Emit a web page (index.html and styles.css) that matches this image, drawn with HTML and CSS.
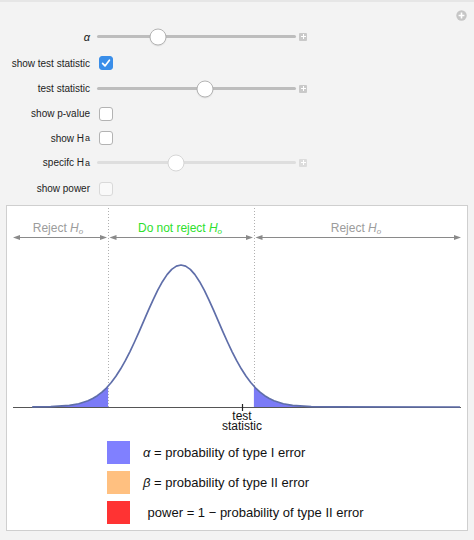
FILE: index.html
```html
<!DOCTYPE html>
<html>
<head>
<meta charset="utf-8">
<link rel="stylesheet" href="styles.css">
</head>
<body>
<div class="panel">
  <div class="topbar">
    <svg class="corner-plus" width="11" height="11" viewBox="0 0 11 11"><circle cx="5.5" cy="5.5" r="5.2" fill="#c6c6c6"/><path d="M5.5 2.6v5.8M2.6 5.5h5.8" stroke="#fff" stroke-width="1.6"/></svg>
  </div>
  <div class="controls">
    <div class="label"><i>α</i></div>
    <div class="ctrl">
      <div class="slider"><div class="track"><span class="thumb" style="left:30.7%"></span></div><span class="pbox"></span></div>
    </div>

    <div class="label">show test statistic</div>
    <div class="ctrl"><span class="cb checked"><svg width="14" height="14" viewBox="0 0 14 14"><path d="M3.6 7.4L6 9.9L10.4 4.2" fill="none" stroke="#fff" stroke-width="1.7" stroke-linecap="round" stroke-linejoin="round"/></svg></span></div>

    <div class="label">test statistic</div>
    <div class="ctrl">
      <div class="slider"><div class="track"><span class="thumb" style="left:54.3%"></span></div><span class="pbox"></span></div>
    </div>

    <div class="label">show p-value</div>
    <div class="ctrl"><span class="cb"></span></div>

    <div class="label">show H<sub>a</sub></div>
    <div class="ctrl"><span class="cb"></span></div>

    <div class="label">specifc H<sub>a</sub></div>
    <div class="ctrl">
      <div class="slider disabled"><div class="track"><span class="thumb" style="left:39.7%"></span></div><span class="pbox"></span></div>
    </div>

    <div class="label">show power</div>
    <div class="ctrl"><span class="cb disabled"></span></div>
  </div>

  <div class="plot">
    <svg class="chart" width="460" height="226" viewBox="7 206 460 226">
      <g stroke="#b0b0b0" stroke-width="1" stroke-dasharray="1 2">
        <line x1="108.5" y1="208" x2="108.5" y2="407"/>
        <line x1="254.5" y1="208" x2="254.5" y2="407"/>
      </g>
      <g font-family="Liberation Sans, Arial, sans-serif" font-size="12" text-anchor="middle">
        <text x="58" y="232" fill="#9c9c9c">Reject <tspan font-style="italic">H</tspan><tspan font-style="italic" font-size="8" dy="2">o</tspan></text>
        <text x="180" y="232" fill="#2ee02e" textLength="84">Do not reject <tspan font-style="italic">H</tspan><tspan font-style="italic" font-size="8" dy="2">o</tspan></text>
        <text x="356" y="232" fill="#9c9c9c">Reject <tspan font-style="italic">H</tspan><tspan font-style="italic" font-size="8" dy="2">o</tspan></text>
      </g>
      <g stroke="#8a8a8a" stroke-width="1">
        <line x1="16" y1="237.5" x2="104" y2="237.5"/>
        <line x1="112" y1="237.5" x2="250" y2="237.5"/>
        <line x1="258" y1="237.5" x2="458" y2="237.5"/>
      </g>
      <g fill="#8a8a8a">
        <polygon points="13,237.5 20,235 20,240"/>
        <polygon points="107,237.5 100,235 100,240"/>
        <polygon points="109.5,237.5 116.5,235 116.5,240"/>
        <polygon points="253,237.5 246,235 246,240"/>
        <polygon points="255.5,237.5 262.5,235 262.5,240"/>
        <polygon points="461,237.5 454,235 454,240"/>
      </g>
      <polygon fill="#7b7bf6" points="32.2,407 32.2,406.95 50.8,406.69 69.4,405.42 78.7,403.76 88,400.76 92.65,398.54 97.3,395.7 101.95,392.14 106.6,387.78 108.1,386.2 108.1,407"/>
      <polygon fill="#7b7bf6" points="253.9,407 253.9,386.2 255.4,387.78 260.05,392.14 264.7,395.7 269.35,398.54 274,400.76 283.3,403.76 292.6,405.42 311.2,406.69 329.8,406.95 460,407"/>
      <line x1="13" y1="407.5" x2="461" y2="407.5" stroke="#555" stroke-width="1"/>
      <polyline fill="none" stroke="#5f6ea9" stroke-width="1.7" stroke-linejoin="round" points="32.2,406.95 50.8,406.69 69.4,405.42 78.7,403.76 88,400.76 92.65,398.54 97.3,395.7 101.95,392.14 106.6,387.78 111.25,382.51 115.9,376.29 120.55,369.08 125.2,360.9 129.85,351.82 134.5,341.99 139.15,331.58 143.8,320.87 148.45,310.16 153.1,299.81 157.75,290.19 162.4,281.69 167.05,274.64 171.7,269.37 176.35,266.1 181,265 185.65,266.1 190.3,269.37 194.95,274.64 199.6,281.69 204.25,290.19 208.9,299.81 213.55,310.16 218.2,320.87 222.85,331.58 227.5,341.99 232.15,351.82 236.8,360.9 241.45,369.08 246.1,376.29 250.75,382.51 255.4,387.78 260.05,392.14 264.7,395.7 269.35,398.54 274,400.76 283.3,403.76 292.6,405.42 311.2,406.69 329.8,406.95 460,407"/>
      <line x1="242.5" y1="404" x2="242.5" y2="411" stroke="#222" stroke-width="1.2"/>
      <g font-family="Liberation Sans, Arial, sans-serif" font-size="12" text-anchor="middle" fill="#111">
        <text x="242" y="419.5">test</text>
        <text x="242" y="430">statistic</text>
      </g>
    </svg>
    <div class="legend">
      <div class="lrow"><span class="swatch blue"></span><span class="ltext"><i>α</i> = probability of type I error</span></div>
      <div class="lrow"><span class="swatch orange"></span><span class="ltext"><i>β</i> = probability of type II error</span></div>
      <div class="lrow"><span class="swatch red"></span><span class="ltext pad"> power = 1 − probability of type II error</span></div>
    </div>
  </div>
</div>
</body>
</html>
```
FILE: styles.css
```css
html, body {
  margin: 0;
  padding: 0;
  background: #f3f3f3;
}
body {
  width: 474px;
  height: 540px;
  overflow: hidden;
  font-family: "Liberation Sans", Arial, sans-serif;
}
.panel {
  border-top: 2px solid #e6e6e6;
}
.topbar {
  height: 21px;
  display: flex;
  justify-content: flex-end;
  align-items: flex-start;
  padding-right: 7px;
}
.corner-plus {
  margin-top: 8px;
  display: block;
}
.controls {
  display: grid;
  grid-template-columns: 90px 1fr;
  grid-template-rows: 27px 26px 25px 25px 24px 25px 27px;
  column-gap: 7px;
}
.label {
  font-size: 10px;
  color: #222;
  text-align: right;
  display: flex;
  align-items: center;
  justify-content: flex-end;
  white-space: nowrap;
}
.label i {
  font-size: 11px;
}
.label sub {
  font-size: 9px;
  vertical-align: -3px;
  line-height: 0;
  margin-left: 1px;
}
.ctrl {
  display: flex;
  align-items: center;
}
.slider {
  display: flex;
  align-items: center;
  gap: 3px;
}
.track {
  position: relative;
  width: 199px;
  height: 3px;
  background: #bdbdbd;
  border-radius: 2px;
}
.thumb {
  position: absolute;
  top: 50%;
  width: 15px;
  height: 15px;
  border: 1px solid #b4b4b4;
  border-radius: 50%;
  background: #fff;
  transform: translate(-50%, -50%);
  box-shadow: 0 1px 1px rgba(0,0,0,0.08);
}
.pbox {
  position: relative;
  width: 8px;
  height: 8px;
  background: #c9c9c9;
  border-radius: 1px;
}
.pbox::before, .pbox::after {
  content: "";
  position: absolute;
  background: #fff;
}
.pbox::before {
  left: 1.5px; right: 1.5px; top: 3.5px; height: 1px;
}
.pbox::after {
  top: 1.5px; bottom: 1.5px; left: 3.5px; width: 1px;
}
.slider.disabled .track {
  background: #dedede;
}
.slider.disabled .thumb {
  border-color: #d6d6d6;
  box-shadow: none;
}
.slider.disabled .pbox {
  background: #dcdcdc;
}
.cb {
  display: block;
  box-sizing: border-box;
  width: 14px;
  height: 14px;
  margin-left: 2px;
  border: 1px solid #b3b3b3;
  border-radius: 3px;
  background: #fff;
}
.cb.checked {
  background: #3a8ee9;
  border-color: #3a8ee9;
}
.cb.checked svg {
  display: block;
  margin: -1px;
}
.cb.disabled {
  border-color: #d9d9d9;
  background: #f9f9f9;
}
.plot {
  margin: 3px 0 0 6px;
  width: 460px;
  background: #fff;
  border: 1px solid #cfcfcf;
}
.chart {
  display: block;
}
.legend {
  padding: 9px 0 6px 100px;
  display: flex;
  flex-direction: column;
  gap: 7px;
}
.lrow {
  display: flex;
  align-items: center;
  gap: 13px;
  height: 23px;
}
.swatch {
  width: 23px;
  height: 23px;
  display: block;
}
.swatch.blue { background: #8080ff; }
.swatch.orange { background: #ffc080; }
.swatch.red { background: #ff3333; }
.ltext {
  font-size: 13px;
  color: #111;
  white-space: pre;
}
.ltext.pad {
  padding-left: 1px;
}
```
